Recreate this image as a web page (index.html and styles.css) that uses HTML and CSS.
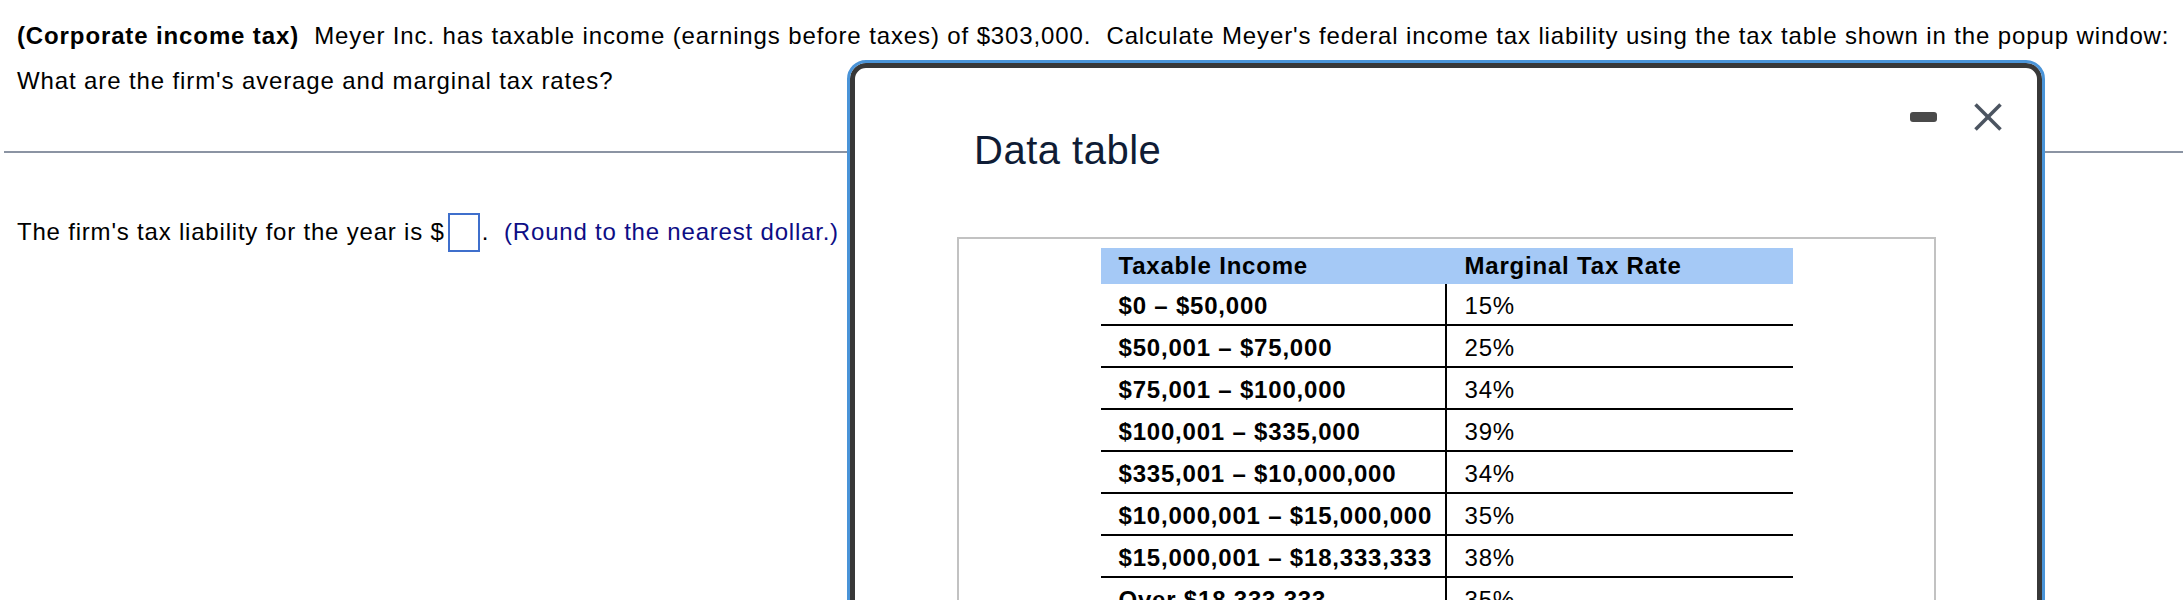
FILE: index.html
```html
<!DOCTYPE html>
<html lang="en">
<head>
<meta charset="utf-8">
<title>Corporate income tax</title>
<link rel="stylesheet" href="styles.css">
</head>
<body>
<div class="page">
  <div class="q-line"><b>(Corporate income tax)</b>  Meyer Inc. has taxable income (earnings before taxes) of $303,000.  Calculate Meyer's federal income tax liability using the tax table shown in the popup window:</div>
  <div class="q-line">What are the firm's average and marginal tax rates?</div>
  <div class="rule"></div>
  <div class="answer">The firm's tax liability for the year is $<span class="input-box"></span>.  <span class="hint">(Round to the nearest dollar.)</span></div>
</div>

<div class="popup">
  <div class="popup-head">
    <h1 class="popup-title">Data table</h1>
    <div class="controls">
      <span class="minimize"></span>
      <svg class="close" width="28" height="28" viewBox="0 0 28 28" aria-label="Close">
        <line x1="1.5" y1="1.5" x2="26.5" y2="26.5"/>
        <line x1="26.5" y1="1.5" x2="1.5" y2="26.5"/>
      </svg>
    </div>
  </div>
  <div class="data-box">
    <table class="tax-table">
      <thead>
        <tr><th>Taxable Income</th><th>Marginal Tax Rate</th></tr>
      </thead>
      <tbody>
        <tr><td class="range">$0 – $50,000</td><td>15%</td></tr>
        <tr><td class="range">$50,001 – $75,000</td><td>25%</td></tr>
        <tr><td class="range">$75,001 – $100,000</td><td>34%</td></tr>
        <tr><td class="range">$100,001 – $335,000</td><td>39%</td></tr>
        <tr><td class="range">$335,001 – $10,000,000</td><td>34%</td></tr>
        <tr><td class="range">$10,000,001 – $15,000,000</td><td>35%</td></tr>
        <tr><td class="range">$15,000,001 – $18,333,333</td><td>38%</td></tr>
        <tr><td class="range">Over $18,333,333</td><td>35%</td></tr>
      </tbody>
    </table>
  </div>
</div>
</body>
</html>
```

FILE: styles.css
```css
html, body {
  margin: 0;
  padding: 0;
  background: #ffffff;
}

body {
  font-family: "Liberation Sans", Arial, Helvetica, sans-serif;
  font-size: 24px;
  letter-spacing: 0.8px;
  color: #000000;
  overflow: hidden;
  height: 600px;
}

.page {
  padding: 13px 0 0 4px;
}

.q-line {
  padding-left: 13px;
  line-height: 45px;
  white-space: pre;
  letter-spacing: 0.88px;
}

.q-line b {
  font-weight: 700;
}

.rule {
  height: 2px;
  background: #8b94a3;
  margin-top: 48px;
}

.answer {
  padding-left: 13px;
  margin-top: 56px;
  line-height: 45px;
  white-space: pre;
}

.input-box {
  display: inline-block;
  width: 28px;
  height: 35px;
  border: 2px solid #3f6fcc;
  vertical-align: -12px;
  margin-left: 3px;
  margin-right: 2px;
}

.hint {
  color: #0d0d85;
}

/* popup window */
.popup {
  position: absolute;
  left: 850px;
  top: 63px;
  width: 1192px;
  height: 640px;
  box-sizing: border-box;
  border: 5px solid #383838;
  border-radius: 16px;
  outline: 3px solid #4a94d8;
  background: #ffffff;
}

.popup-head {
  display: flex;
  justify-content: space-between;
  align-items: flex-start;
  padding: 0 35px 0 119px;
}

.popup-title {
  margin: 59px 0 0 0;
  font-size: 40px;
  line-height: 46px;
  font-weight: 400;
  letter-spacing: 0.5px;
  color: #0f1c35;
}

.controls {
  margin-top: 35px;
  height: 28px;
  display: flex;
  align-items: center;
  gap: 37px;
}

.minimize {
  display: block;
  width: 27px;
  height: 10px;
  border-radius: 3px;
  background: #4a4a4a;
}

.close {
  display: block;
}

.close line {
  stroke: #4b5460;
  stroke-width: 3.6;
}

.data-box {
  margin: 64px 101px 0 102px;
  border: 2px solid #c2c2c2;
  padding-top: 9px;
  height: 600px;
}

.tax-table {
  margin: 0 auto;
  width: 692px;
  border-collapse: separate;
  border-spacing: 0;
  table-layout: fixed;
}

.tax-table th {
  background: #a5c9f6;
  text-align: left;
  font-weight: 700;
  height: 36px;
  line-height: 36px;
  padding: 0 0 0 18px;
}

.tax-table td {
  padding: 4px 0 0 18px;
  line-height: 36px;
  border-bottom: 2px solid #000000;
  white-space: nowrap;
}

.tax-table td.range {
  font-weight: 700;
  border-right: 2px solid #000000;
  padding-left: 18px;
}
```
